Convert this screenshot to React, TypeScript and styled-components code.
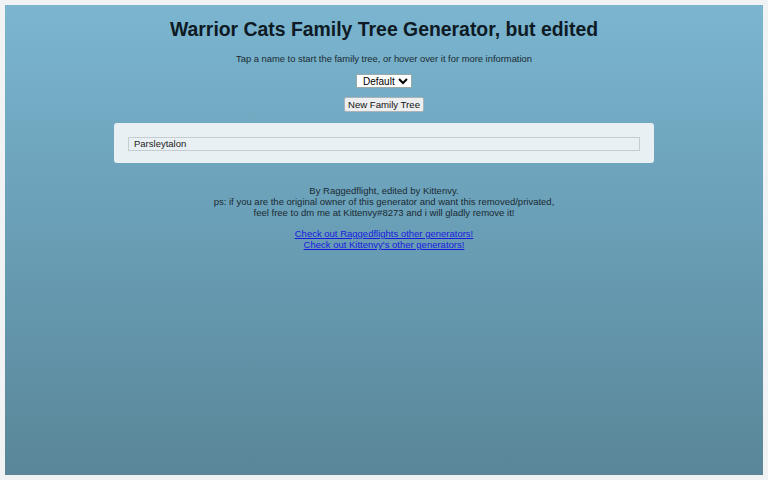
import React from 'react';
import styled, { createGlobalStyle } from 'styled-components';

const GlobalStyle = createGlobalStyle`
    html, body {
        margin: 0;
        padding: 0;
        background: #f1f2f4;
    }
    body {
        font-family: "Liberation Sans", Arial, sans-serif;
    }
`;

const Frame = styled.div`
    padding: 5px;
    height: 480px;
    box-sizing: border-box;
`;

const Page = styled.main`
    height: 470px;
    background: linear-gradient(to bottom, #7bb5cf 0%, #6aa0b8 45%, #5a8698 100%);
    display: flex;
    flex-direction: column;
    align-items: center;
    color: #111;
`;

const Title = styled.h1`
    margin: 13px 0 0;
    font-size: 19.4px;
    font-weight: bold;
    color: #0e1a24;
`;

const Hint = styled.p`
    margin: 12px 0 0;
    font-size: 9.4px;
    color: #1a2a33;
`;

const Picker = styled.select`
    margin-top: 10px;
    font-family: inherit;
    font-size: 10px;
    height: 14px;
    padding: 0 0 0 2px;
    border: 1px solid #9aa;
    background: #fff;
    border-radius: 0;
`;

const Button = styled.button`
    margin-top: 9px;
    font-family: inherit;
    font-size: 9.6px;
    padding: 1px 3px;
    border: 1px solid #aab3b8;
    background: #eceeef;
    color: #111;
    border-radius: 2px;
`;

const Panel = styled.section`
    margin-top: 11px;
    width: 540px;
    box-sizing: border-box;
    padding: 14px 14px 12px;
    background: #e9f0f4;
    border-radius: 3px;
`;

const NameRow = styled.div`
    height: 12px;
    border: 1px solid #c5cdd1;
    font-size: 9.5px;
    line-height: 12px;
    padding-left: 5px;
    color: #222;
`;

const Footer = styled.div`
    margin-top: 22px;
    font-size: 9.5px;
    line-height: 11px;
    text-align: center;
    color: #1a2a33;
`;

const Links = styled.div`
    margin-top: 10px;
    display: flex;
    flex-direction: column;
    align-items: center;
`;

const Link = styled.a`
    color: #1a1adf;
    text-decoration: underline;
`;

export default function App() {
    return (
        <>
            <GlobalStyle />
            <Frame>
                <Page>
                    <Title>Warrior Cats Family Tree Generator, but edited</Title>
                    <Hint>Tap a name to start the family tree, or hover over it for more information</Hint>
                    <Picker defaultValue="Default">
                        <option>Default</option>
                    </Picker>
                    <Button>New Family Tree</Button>
                    <Panel>
                        <NameRow>Parsleytalon</NameRow>
                    </Panel>
                    <Footer>
                        By Raggedflight, edited by Kittenvy.
                        <br />
                        ps: if you are the original owner of this generator and want this removed/privated,
                        <br />
                        feel free to dm me at Kittenvy#8273 and i will gladly remove it!
                        <Links>
                            <Link href="#">Check out Raggedflights other generators!</Link>
                            <Link href="#">Check out Kittenvy's other generators!</Link>
                        </Links>
                    </Footer>
                </Page>
            </Frame>
        </>
    );
}
